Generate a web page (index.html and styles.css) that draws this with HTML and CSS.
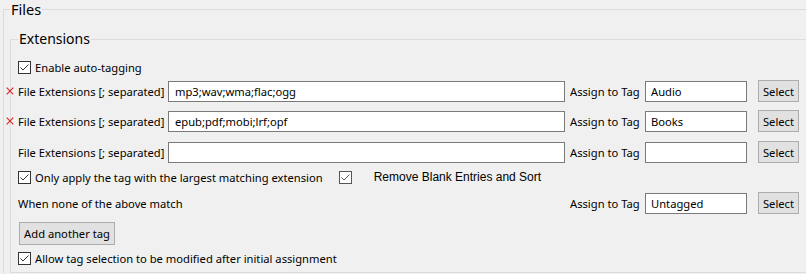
FILE: index.html
```html
<!DOCTYPE html>
<html>
<head>
<meta charset="utf-8">
<link rel="stylesheet" href="styles.css">
</head>
<body>
<fieldset class="files">
  <legend class="files-legend">Files</legend>
  <fieldset class="ext-box">
    <legend class="ext-legend">Extensions</legend>
    <div class="row row-auto">
      <span class="cb"><svg viewBox="0 0 13 13" width="13" height="13"><rect x="0.5" y="0.5" width="12" height="12" fill="#fff" stroke="#333"/><polyline points="2.5,6.5 5,9 10.5,3.5" fill="none" stroke="#333" stroke-width="1"/></svg></span>
      <span class="cb-text">Enable auto-tagging</span>
    </div>
    <div class="row row-1">
      <span class="del"><svg viewBox="0 0 8 8" width="8" height="8"><path d="M0.7 0.7L7.3 7.3M7.3 0.7L0.7 7.3" stroke="#e0282c" stroke-width="1.2" fill="none"/></svg></span>
      <span class="lbl">File Extensions [; separated]</span>
      <span class="input ext">mp3;wav;wma;flac;ogg</span>
      <span class="assign">Assign to Tag</span>
      <span class="input tag">Audio</span>
      <span class="btn sel">Select</span>
    </div>
    <div class="row row-2">
      <span class="del"><svg viewBox="0 0 8 8" width="8" height="8"><path d="M0.7 0.7L7.3 7.3M7.3 0.7L0.7 7.3" stroke="#e0282c" stroke-width="1.2" fill="none"/></svg></span>
      <span class="lbl">File Extensions [; separated]</span>
      <span class="input ext">epub;pdf;mobi;lrf;opf</span>
      <span class="assign">Assign to Tag</span>
      <span class="input tag">Books</span>
      <span class="btn sel">Select</span>
    </div>
    <div class="row row-3">
      <span class="lbl">File Extensions [; separated]</span>
      <span class="input ext"></span>
      <span class="assign">Assign to Tag</span>
      <span class="input tag"></span>
      <span class="btn sel">Select</span>
    </div>
    <div class="row row-only">
      <span class="cb"><svg viewBox="0 0 13 13" width="13" height="13"><rect x="0.5" y="0.5" width="12" height="12" fill="#fff" stroke="#333"/><polyline points="2.5,6.5 5,9 10.5,3.5" fill="none" stroke="#333" stroke-width="1"/></svg></span>
      <span class="cb-text only-text">Only apply the tag with the largest matching extension</span>
      <span class="cb"><svg viewBox="0 0 13 13" width="13" height="13"><rect x="0.5" y="0.5" width="12" height="12" fill="#fff" stroke="#555"/><polyline points="2.5,6.5 5,9 10.5,3.5" fill="none" stroke="#555" stroke-width="1"/></svg></span>
      <span class="remove-text">Remove Blank Entries and Sort</span>
    </div>
    <div class="row row-none">
      <span class="none-lbl">When none of the above match</span>
      <span class="assign">Assign to Tag</span>
      <span class="input tag">Untagged</span>
      <span class="btn sel">Select</span>
    </div>
    <div class="row row-add">
      <span class="btn add">Add another tag</span>
    </div>
    <div class="row row-allow">
      <span class="cb"><svg viewBox="0 0 13 13" width="13" height="13"><rect x="0.5" y="0.5" width="12" height="12" fill="#fff" stroke="#333"/><polyline points="2.5,6.5 5,9 10.5,3.5" fill="none" stroke="#333" stroke-width="1"/></svg></span>
      <span class="cb-text">Allow tag selection to be modified after initial assignment</span>
    </div>
  </fieldset>
</fieldset>
</body>
</html>
```
FILE: styles.css
```css
html, body {
  margin: 0;
  padding: 0;
  background: #f0f0f0;
  overflow: hidden;
  width: 806px;
  height: 274px;
}
body {
  font-family: "Noto Sans", "Open Sans", sans-serif;
  font-size: 11.2px;
  color: #000;
}
.files {
  margin: 0 -40px 0 3px;
  padding: 0 20px 0 6px;
  border: 1px solid #dcdcdc;
  border-bottom: 0;
  min-width: 0;
}
.files-legend {
  padding: 0 1px;
  font-size: 14.5px;
  line-height: 18px;
}
.ext-box {
  margin: 11px 0 0 0;
  padding: 8px 0 4px 7px;
  border: 1px solid #dcdcdc;
  min-width: 0;
}
.ext-legend {
  padding: 0 1px;
  font-size: 14px;
  line-height: 20px;
}
.row {
  display: flex;
  align-items: center;
  position: relative;
  white-space: nowrap;
}
.row > * { flex-shrink: 0; }
.row-auto { height: 20px; }
.row-1 { height: 22px; margin-top: 3px; }
.row-2 { height: 22px; margin-top: 8px; }
.row-3 { height: 22px; margin-top: 9px; }
.row-only { height: 20px; margin-top: 4px; }
.row-none { height: 22px; margin-top: 5px; }
.row-add { height: 23px; margin-top: 8px; }
.row-allow { height: 20px; margin-top: 3px; }
.cb {
  width: 13px;
  height: 13px;
  display: flex;
}
.cb-text {
  margin-left: 4px;
}
.only-text {
  margin-right: 16px;
}
.remove-text {
  margin-left: 22px;
  font-family: "Liberation Sans", Arial, sans-serif;
  font-size: 12px;
}
.del {
  position: absolute;
  left: -12px;
  top: 7px;
  width: 8px;
  height: 8px;
  display: flex;
}
.lbl {
  width: 150px;
}
.none-lbl {
  width: 547px;
}
.input {
  box-sizing: border-box;
  height: 21px;
  line-height: 19px;
  border: 1px solid #7a7a7a;
  background: #fff;
  padding: 0 6px;
}
.ext {
  width: 397px;
}
.tag {
  width: 102px;
  padding-left: 5px;
}
.assign {
  width: 75px;
  margin-left: 5px;
}
.btn {
  box-sizing: border-box;
  background: #e1e1e1;
  border: 1px solid #adadad;
  display: flex;
  align-items: center;
  justify-content: center;
}
.sel {
  width: 41px;
  height: 22px;
  margin-left: 11px;
}
.add {
  width: 96px;
  height: 23px;
  margin-left: 1px;
}
```
